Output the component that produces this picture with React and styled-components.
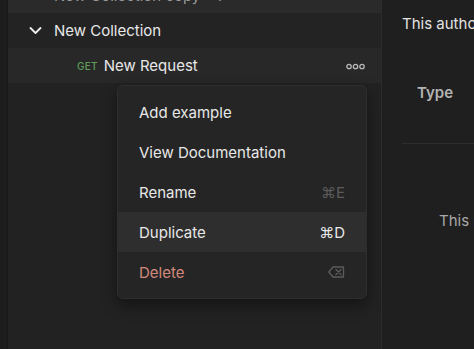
import styled, { createGlobalStyle } from "styled-components";

const GlobalStyle = createGlobalStyle`
  html, body {
    margin: 0;
    padding: 0;
    background: #1f1f1f;
    overflow: hidden;
  }
  body {
    font-family: Inter, "Noto Sans", "Liberation Sans", sans-serif;
    -webkit-font-smoothing: antialiased;
  }
`;

const Screen = styled.div`
  display: flex;
  width: 474px;
  height: 349px;
  overflow: hidden;
  background: #1f1f1f;
`;

const Rail = styled.div`
  width: 7px;
  flex-shrink: 0;
  background: #1d1d1d;
  border-right: 1px solid #181818;
`;

const Sidebar = styled.div`
  position: relative;
  width: 373px;
  flex-shrink: 0;
  background: #222222;
  border-right: 1px solid #2c2c2c;
  overflow: hidden;
`;

const TreeRow = styled.div`
  display: flex;
  align-items: center;
  height: 35px;
  padding-left: ${(p) => p.$indent}px;
  padding-right: 16px;
  background: ${(p) => p.$bg};
  color: #e8e8e8;
  font-size: 15px;
  white-space: nowrap;
`;

const CutRow = styled(TreeRow)`
  height: 36px;
  margin-top: -23px;
  color: #9a9a9a;
`;

const Chevron = styled.span`
  display: flex;
  width: 25px;
  color: #eeeeee;
`;

const Method = styled.span`
  font-size: 10px;
  font-weight: 500;
  color: #5f9f5a;
  margin-right: 6px;
  letter-spacing: 0.2px;
`;

const Label = styled.span`
  flex: 1;
`;

const More = styled.span`
  display: flex;
  padding-top: 2px;
  color: #b8b8b8;
`;

const Menu = styled.div`
  position: absolute;
  left: 109px;
  top: 85px;
  width: 248px;
  padding: 6px 0;
  background: #252525;
  border: 1px solid #2e2e2e;
  border-radius: 6px;
  box-shadow: 0 6px 16px rgba(0, 0, 0, 0.45);
`;

const MenuItem = styled.div`
  display: flex;
  align-items: center;
  justify-content: space-between;
  height: 40px;
  padding: 0 21px;
  font-size: 15px;
  color: ${(p) => (p.$danger ? "#d38a7d" : "#e8e8e8")};
  background: ${(p) => (p.$active ? "#2e2e2e" : "transparent")};
`;

const Shortcut = styled.span`
  display: flex;
  align-items: center;
  font-size: 15px;
  color: ${(p) => (p.$dim ? "#5c5c5c" : "#e8e8e8")};
`;

const Panel = styled.div`
  flex: 1;
  display: flex;
  flex-direction: column;
  padding-left: 20px;
  color: #e2e2e2;
  font-size: 15px;
  white-space: nowrap;
  overflow: hidden;
`;

const Intro = styled.div`
  margin-top: 14px;
  height: 20px;
`;

const Header = styled.div`
  margin-top: 49px;
  padding-left: 15px;
  font-weight: 600;
  color: #b3b3b3;
  height: 20px;
`;

const Divider = styled.div`
  margin-top: 40px;
  height: 1px;
  background: #2d2d2d;
`;

const Empty = styled.div`
  margin-top: 67px;
  padding-left: 37px;
  color: #a8a8a8;
`;

const ChevronDown = () => (
  <svg width="13" height="9" viewBox="0 0 13 9" fill="none">
    <path d="M1.5 2l5 5 5-5" stroke="currentColor" strokeWidth="1.8" strokeLinecap="round" strokeLinejoin="round" />
  </svg>
);

const Dots = () => (
  <svg width="19" height="7" viewBox="0 0 19 7" fill="none" stroke="currentColor" strokeWidth="1.3">
    <circle cx="3" cy="3.5" r="2.2" />
    <circle cx="9.5" cy="3.5" r="2.2" />
    <circle cx="16" cy="3.5" r="2.2" />
  </svg>
);

const Backspace = () => (
  <svg width="17" height="12" viewBox="0 0 17 12" fill="none" stroke="currentColor" strokeWidth="1.3" strokeLinejoin="round">
    <path d="M5 1h10.5v10H5L0.8 6z" />
    <path d="M8 3.5l5 5M13 3.5l-5 5" strokeLinecap="round" />
  </svg>
);

const items = [
  { label: "Add example" },
  { label: "View Documentation" },
  { label: "Rename", key: "⌘E", dim: true },
  { label: "Duplicate", key: "⌘D", active: true },
  { label: "Delete", danger: true, backspace: true },
];

export default function App() {
  return (
    <Screen>
      <GlobalStyle />
      <Rail />
      <Sidebar>
        <CutRow $indent={46} $bg="#2a2a2a">
          New Collection copy - 1
        </CutRow>
        <TreeRow $indent={21} $bg="#232323">
          <Chevron>
            <ChevronDown />
          </Chevron>
          <Label>New Collection</Label>
        </TreeRow>
        <TreeRow $indent={69} $bg="#282828">
          <Method>GET</Method>
          <Label>New Request</Label>
          <More>
            <Dots />
          </More>
        </TreeRow>
        <Menu>
          {items.map((it) => (
            <MenuItem key={it.label} $active={it.active} $danger={it.danger}>
              <span>{it.label}</span>
              {it.key && <Shortcut $dim={it.dim}>{it.key}</Shortcut>}
              {it.backspace && (
                <Shortcut $dim>
                  <Backspace />
                </Shortcut>
              )}
            </MenuItem>
          ))}
        </Menu>
      </Sidebar>
      <Panel>
        <Intro>This authorization method will be used</Intro>
        <Header>Type</Header>
        <Divider />
        <Empty>This request does not use any auth</Empty>
      </Panel>
    </Screen>
  );
}
